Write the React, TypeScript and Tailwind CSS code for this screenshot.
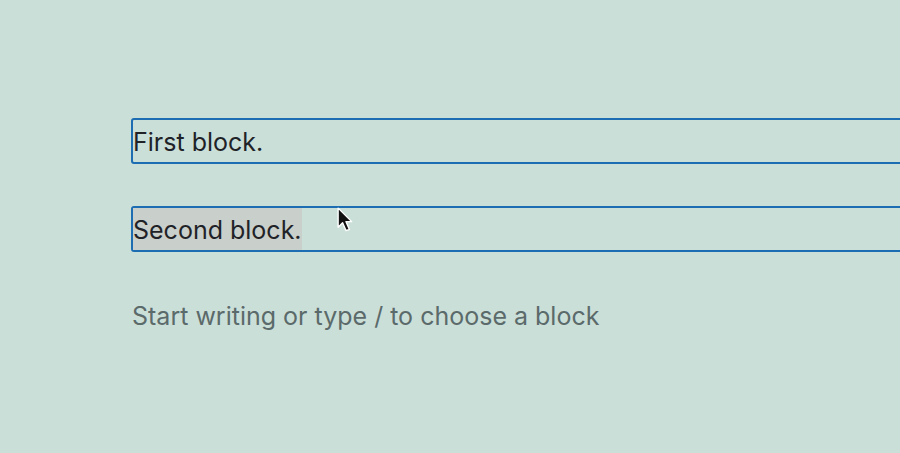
import React from "react";

export default function App() {
  return (
    <div
      className="relative w-[900px] h-[453px] overflow-hidden bg-[#cbdfd9]"
      style={{ fontFamily: "Inter, 'Noto Sans', sans-serif" }}
    >
      <div className="flex flex-col gap-[42px] pt-[118px] pl-[131px]">
        <div className="h-[46px] w-[800px] rounded-[3px] border-2 border-[#1d6db3] text-[25px] leading-[44px] text-[#1f2328]">
          First block.
        </div>
        <div className="h-[46px] w-[800px] rounded-[3px] border-2 border-[#1d6db3] text-[25px] leading-[44px] text-[#1f2328]">
          <span className="bg-[#c9cfca] inline-block h-[42px]">Second block.</span>
        </div>
        <div className="h-[46px] text-[25px] leading-[44px] text-[#5b6a6a] pl-[1px]">
          Start writing or type / to choose a block
        </div>
      </div>
      <svg
        className="absolute left-[337px] top-[207px]"
        width="18"
        height="27"
        viewBox="0 0 16 24"
      >
        <path
          d="M1 1 L1 18 L5 14 L8 21 L11 20 L8 13 L13 13 Z"
          fill="#111"
          stroke="#fff"
          strokeWidth="1.2"
          strokeLinejoin="round"
        />
      </svg>
    </div>
  );
}
